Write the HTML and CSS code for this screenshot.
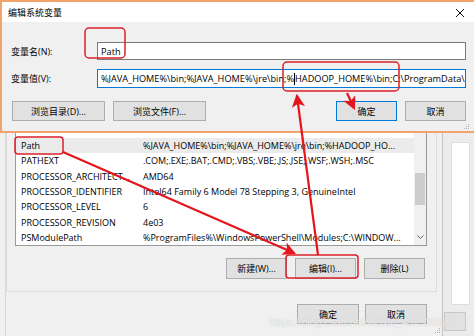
FILE: index.html
```html
<!DOCTYPE html>
<html lang="zh-CN">
<head>
    <meta charset="UTF-8">
    <title>编辑系统变量</title>
    <link rel="stylesheet" href="styles.css">
</head>
<body>
<div class="screen">

    <!-- environment variables window (behind) -->
    <div class="env-window">
        <div class="group">
            <div class="list">
                <div class="list-body">
                    <div class="row head"></div>
                    <div class="row selected"><span class="col-name">Path</span><span class="col-value">%JAVA_HOME%\bin;%JAVA_HOME%\jre\bin;%HADOOP_HO...</span></div>
                    <div class="row"><span class="col-name">PATHEXT</span><span class="col-value">.COM;.EXE;.BAT;.CMD;.VBS;.VBE;.JS;.JSE;.WSF;.WSH;.MSC</span></div>
                    <div class="row"><span class="col-name">PROCESSOR_ARCHITECT...</span><span class="col-value">AMD64</span></div>
                    <div class="row"><span class="col-name">PROCESSOR_IDENTIFIER</span><span class="col-value">Intel64 Family 6 Model 78 Stepping 3, GenuineIntel</span></div>
                    <div class="row"><span class="col-name">PROCESSOR_LEVEL</span><span class="col-value">6</span></div>
                    <div class="row"><span class="col-name">PROCESSOR_REVISION</span><span class="col-value">4e03</span></div>
                    <div class="row"><span class="col-name">PSModulePath</span><span class="col-value">%ProgramFiles%\WindowsPowerShell\Modules;C:\WINDOW...</span></div>
                </div>
                <div class="scrollbar">
                    <div class="thumb"></div>
                    <svg class="chevron" width="7" height="5" viewBox="0 0 7 5"><polyline points="0.5,0.5 3.5,3.5 6.5,0.5" fill="none" stroke="#606060" stroke-width="1"/></svg>
                </div>
            </div>
            <div class="list-buttons">
                <button class="btn">新建(W)...</button>
                <button class="btn">编辑(I)...</button>
                <button class="btn">删除(L)</button>
            </div>
        </div>
        <div class="window-buttons">
            <button class="btn">确定</button>
            <button class="btn">取消</button>
        </div>
        <svg class="grip env-grip" width="6" height="6" viewBox="0 0 6 6"><g fill="#b0b0b0"><rect x="4" y="0" width="1" height="1"/><rect x="2" y="2" width="1" height="1"/><rect x="4" y="2" width="1" height="1"/><rect x="0" y="4" width="1" height="1"/><rect x="2" y="4" width="1" height="1"/><rect x="4" y="4" width="1" height="1"/></g></svg>
    </div>

    <!-- system properties window (far back) -->
    <div class="back-strip">
        <div class="back-panel"></div>
        <div class="back-button"></div>
    </div>

    <!-- edit dialog (front) -->
    <div class="edit-dialog">
        <div class="title-bar">
            <span class="title">编辑系统变量</span>
            <svg class="close" width="10" height="10" viewBox="0 0 10 10"><path d="M1 1 L9 9 M9 1 L1 9" stroke="#111" stroke-width="1"/></svg>
        </div>
        <div class="dialog-body">
            <div class="field">
                <span class="field-label">变量名(N):</span>
                <div class="input">Path</div>
            </div>
            <div class="field">
                <span class="field-label">变量值(V):</span>
                <div class="input focused">%JAVA_HOME%\bin;%JAVA_HOME%\jre\bin;%<span class="caret"></span>HADOOP_HOME%\bin;C:\ProgramData\</div>
            </div>
            <div class="dialog-actions">
                <button class="btn wide">浏览目录(D)...</button>
                <button class="btn wide">浏览文件(F)...</button>
                <span class="spacer"></span>
                <button class="btn default">确定</button>
                <button class="btn">取消</button>
            </div>
        </div>
        <svg class="grip" width="6" height="6" viewBox="0 0 6 6"><g fill="#b0b0b0"><rect x="4" y="0" width="1" height="1"/><rect x="2" y="2" width="1" height="1"/><rect x="4" y="2" width="1" height="1"/><rect x="0" y="4" width="1" height="1"/><rect x="2" y="4" width="1" height="1"/><rect x="4" y="4" width="1" height="1"/></g></svg>
    </div>

    <!-- red annotations -->
    <svg class="marks" width="474" height="336" viewBox="0 0 474 336">
        <defs>
            <marker id="head" markerWidth="6" markerHeight="6" refX="5" refY="3" orient="auto" markerUnits="strokeWidth">
                <path d="M0,0 L6,3 L0,6 L1.5,3 z" fill="#e3161d"/>
            </marker>
        </defs>
        <g fill="none" stroke="#d9202a" stroke-width="1.5">
            <rect x="85" y="28" width="40" height="30" rx="4"/>
            <rect x="283" y="62" width="116" height="29" rx="4"/>
            <rect x="15" y="137" width="48" height="17" rx="3"/>
            <rect x="286" y="255" width="72" height="23" rx="3"/>
        </g>
        <g stroke="#e3161d" stroke-width="2.2" marker-end="url(#head)">
            <line x1="63" y1="152" x2="294" y2="253"/>
            <line x1="318" y1="255" x2="297" y2="96"/>
            <line x1="347" y1="93" x2="354" y2="108"/>
        </g>
    </svg>

    <div class="watermark">https://blog.csdn.net/weixin_43252658</div>
</div>
</body>
</html>
```

FILE: styles.css
```css
* {
    box-sizing: border-box;
}

body {
    margin: 0;
    font-family: 'Open Sans', 'Noto Sans CJK SC', sans-serif;
    font-size: 9px;
    color: #000;
}

.screen {
    position: relative;
    width: 474px;
    height: 336px;
    overflow: hidden;
    display: flex;
    padding-left: 5px;
    background: #f0f0f0;
}

/* Environment variables window */
.env-window {
    position: relative;
    width: 438px;
    padding-top: 104px;
    background: #f0f0f0;
    border-left: 1px solid #d8d8d8;
    border-right: 1px solid #c4c4c4;
}

.group {
    width: 431px;
    border: 1px solid #dcdcdc;
    padding: 7px 9px 12px 8px;
}

.list {
    display: flex;
    height: 134px;
    border: 1px solid #9a9a9a;
    background: #fff;
}

.list-body {
    flex: 1;
    overflow: hidden;
}

.row {
    display: flex;
    height: 15.3px;
    align-items: center;
    white-space: nowrap;
    padding-left: 5px;
}

.row.head {
    height: 25px;
}

.row.selected {
    background: #ebebeb;
}

.col-name {
    width: 122px;
    overflow: hidden;
}

.col-value {
    flex: 1;
    overflow: hidden;
}

.scrollbar {
    position: relative;
    width: 12px;
    background: #f0f0f0;
}

.thumb {
    position: absolute;
    top: 60px;
    left: 1px;
    width: 10px;
    height: 32px;
    background: #cdcdcd;
}

.chevron {
    position: absolute;
    left: 3px;
    bottom: 5px;
}

.list-buttons {
    display: flex;
    justify-content: flex-end;
    gap: 8px;
    margin-top: 12px;
    padding-right: 2px;
}

.window-buttons {
    display: flex;
    justify-content: flex-end;
    gap: 6px;
    margin-top: 12px;
    padding-right: 15px;
}

.btn {
    width: 61px;
    height: 21px;
    padding: 0;
    font-family: inherit;
    font-size: 9px;
    color: #000;
    background: #e1e1e1;
    border: 1px solid #adadad;
}

.window-buttons .btn {
    width: 62px;
    height: 20px;
}

/* far back window */
.back-strip {
    flex: 1;
    display: flex;
    flex-direction: column;
    padding: 142px 4px 0 8px;
    background: #ececec;
}

.back-panel {
    height: 163px;
    background: #fff;
    border: 1px solid #dedede;
}

.back-button {
    margin: 7px 0 0 -7px;
    width: 22px;
    height: 19px;
    background: #e1e1e1;
    border: 1px solid #c8c8c8;
}

/* front edit dialog */
.edit-dialog {
    position: absolute;
    top: 0;
    left: 0;
    width: 476px;
    height: 133px;
    border: 2px solid #f2a36c;
    background: #f0f0f0;
}

.title-bar {
    display: flex;
    align-items: center;
    justify-content: space-between;
    height: 20px;
    padding: 0 9px 0 6px;
    background: #fff;
}

.title {
    font-size: 9px;
}

.close {
    margin-top: 2px;
}

.dialog-body {
    padding: 20px 8px 0 9px;
}

.field {
    display: flex;
    align-items: center;
    height: 18px;
    margin-bottom: 9px;
}

.field + .field {
    height: 19px;
    margin-bottom: 13px;
}

.field-label {
    width: 86px;
}

.input {
    flex: 1;
    height: 100%;
    display: flex;
    align-items: center;
    padding-left: 3px;
    font-size: 9.2px;
    background: #fff;
    border: 1px solid #7a7a7a;
    white-space: nowrap;
    overflow: hidden;
}

.input.focused {
    border-color: #0078d7;
}

.caret {
    display: inline-block;
    width: 1px;
    height: 12px;
    background: #000;
}

.dialog-actions {
    display: flex;
    gap: 8px;
    padding-left: 1px;
}

.dialog-actions .btn {
    width: 61px;
    height: 20px;
}

.dialog-actions .btn.wide {
    width: 93px;
}

.dialog-actions .btn.default {
    border-color: #0078d7;
}

.spacer {
    flex: 1;
}

.grip {
    position: absolute;
    right: 4px;
    bottom: 1px;
}

.env-grip {
    right: 1px;
    bottom: 2px;
}

/* annotations */
.marks {
    position: absolute;
    top: 0;
    left: 0;
    pointer-events: none;
}

.watermark {
    position: absolute;
    left: 270px;
    top: 316px;
    font-family: 'Liberation Sans', sans-serif;
    font-size: 10.5px;
    color: rgba(255, 255, 255, 0.75);
    text-shadow: 0 0 1px rgba(150, 150, 150, 0.6);
    pointer-events: none;
}
```
